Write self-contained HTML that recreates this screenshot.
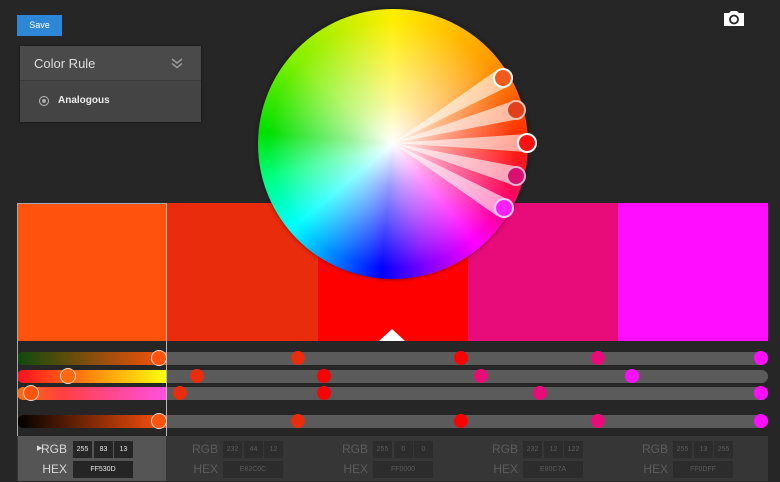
<!DOCTYPE html>
<html><head><style>
*{margin:0;padding:0;box-sizing:border-box}
body{width:780px;height:482px;background:#262626;position:relative;overflow:hidden;font-family:"Liberation Sans",sans-serif}
.abs{position:absolute}
.sw{position:absolute;top:203px;height:138px}
.track{position:absolute;left:17px;width:751px;height:13px;border-radius:7px;background:#5b5b5b}
.grad{position:absolute;left:17px;width:150px;height:13px;border-radius:7px 0 0 7px}
.dot{position:absolute;width:14px;height:14px;border-radius:50%;margin:-7px 0 0 -7px}
.ring{position:absolute;width:16px;height:16px;border-radius:50%;margin:-8px 0 0 -8px;border:1.5px solid #f3d6c6}
.panel{position:absolute;top:436px;height:45px;width:150px}
.lbl{position:absolute;font-size:12px;color:#5d5d5d;text-align:right;width:30px}
.box{position:absolute;height:17px;background:#2c2c2c;font-size:7px;color:#5d5d5d;text-align:center;line-height:17px}
.sel .lbl{color:#d8d8d8}.sel .box{background:#252525;color:#e8e8e8}
</style></head><body>
<div class="abs" style="left:17px;top:15px;width:45px;height:21px;background:#2e86d6;color:#fff;font-size:9px;line-height:21px;text-align:center">Save</div>
<div class="abs" style="left:20px;top:46px;width:181px;height:76px;background:#444;box-shadow:0 0 3px #111">
 <div style="height:35px;background:#4a4a4a;border-bottom:1px solid #3a3a3a;color:#ddd;font-size:13px;line-height:35px;padding-left:14px;position:relative">Color Rule<svg style="position:absolute;left:151px;top:12px" width="12" height="11" viewBox="0 0 12 11"><path d="M1 1 L6 5 L11 1 M1 5.5 L6 9.5 L11 5.5" fill="none" stroke="#999" stroke-width="1.5"/></svg></div>
 <div style="height:40px;color:#eee;font-size:10px;font-weight:bold;line-height:40px;padding-left:38px;position:relative">Analogous<span style="position:absolute;left:19px;top:15px;width:10px;height:10px;border:1px solid #bbb;border-radius:50%"></span><span style="position:absolute;left:22px;top:18px;width:4px;height:4px;background:#aaa;border-radius:50%"></span></div>
</div>
<svg class="abs" style="left:722px;top:10px" width="24" height="18" viewBox="0 0 24 18"><path d="M7 3 L9 1 H15 L17 3 H22 V16 H2 V3 Z" fill="#fff"/><circle cx="12" cy="9.5" r="4" fill="none" stroke="#222" stroke-width="1.8"/></svg>
<div class="sw" style="left:17px;width:150px;background:#ff530d"></div>
<div class="sw" style="left:167px;width:151px;background:#e82c0c"></div>
<div class="sw" style="left:318px;width:150px;background:#ff0000"></div>
<div class="sw" style="left:468px;width:150px;background:#e80c7a"></div>
<div class="sw" style="left:618px;width:150px;background:#ff0dff"></div>
<div class="abs" style="left:379px;top:329px;width:0;height:0;border-left:13px solid transparent;border-right:13px solid transparent;border-bottom:12px solid #fff"></div>
<div class="abs" style="left:258px;top:9px;width:270px;height:270px;border-radius:50%;background:conic-gradient(from 0deg,#ffee00,#ff9900 50deg,#ff2000 90deg,#ff0080 120deg,#ff00ff 140deg,#8000ff 165deg,#0000ff 185deg,#0090ff 210deg,#00ffff 230deg,#00ff80 255deg,#00e000 275deg,#80f000 310deg,#ffee00);box-shadow:0 0 4px rgba(0,0,0,.5)"><div style="position:absolute;inset:0;border-radius:50%;background:radial-gradient(circle,#fff 0,rgba(255,255,255,.6) 22%,rgba(255,255,255,0) 65%)"></div></div>
<svg class="abs" style="left:0;top:0" width="780" height="482">
<g fill="#fff" fill-opacity=".6">
<polygon points="393,143 497,70 509,86"/>
<polygon points="393,143 513,101 519,119"/>
<polygon points="393,143 527,134 527,152"/>
<polygon points="393,143 519,167 513,185"/>
<polygon points="393,143 509,200 497,216"/>
</g>
<circle cx="503" cy="78" r="9" fill="#f05a1a" stroke="#fff" stroke-width="2"/>
<circle cx="516" cy="110" r="9" fill="#e0401a" stroke="#f0c0b0" stroke-width="2"/>
<circle cx="527" cy="143" r="9" fill="#ff1010" stroke="#fff" stroke-width="2"/>
<circle cx="516" cy="176" r="9" fill="#d81070" stroke="#f0b0d0" stroke-width="2"/>
<circle cx="504" cy="208" r="9" fill="#ff20ff" stroke="#f8c8f8" stroke-width="2"/>
</svg>
<div class="track" style="top:352px"></div>
<div class="track" style="top:370px"></div>
<div class="track" style="top:387px"></div>
<div class="track" style="top:415px"></div>
<div class="grad" style="top:352px;background:linear-gradient(90deg,#0d4a0d,#ff530d)"></div>
<div class="grad" style="top:370px;background:linear-gradient(90deg,#ff0d20,#ff8a0d 50%,#ffff0d)"></div>
<div class="grad" style="top:387px;background:linear-gradient(90deg,#ff700d,#ff4040 30%,#ff50e0)"></div>
<div class="grad" style="top:415px;background:linear-gradient(90deg,#000,#ff530d)"></div>
<div class="abs" style="left:17px;top:203px;width:150px;height:278px;border:1px solid #aaa;border-right-color:#bbb"></div>
<div class="ring" style="left:159px;top:358px;background:#ff530d"></div>
<div class="ring" style="left:68px;top:376px;background:#ff6a0d"></div>
<div class="ring" style="left:31px;top:393px;background:#ff530d"></div>
<div class="ring" style="left:159px;top:421px;background:#ff530d"></div>
<div class="dot" style="left:298px;top:358px;background:#e82c0c"></div>
<div class="dot" style="left:461px;top:358px;background:#ff0000"></div>
<div class="dot" style="left:598px;top:358px;background:#e80c7a"></div>
<div class="dot" style="left:761px;top:358px;background:#ff0dff"></div>
<div class="dot" style="left:197px;top:376px;background:#e82c0c"></div>
<div class="dot" style="left:324px;top:376px;background:#ff0000"></div>
<div class="dot" style="left:481px;top:376px;background:#e80c7a"></div>
<div class="dot" style="left:632px;top:376px;background:#ff0dff"></div>
<div class="dot" style="left:180px;top:393px;background:#e82c0c"></div>
<div class="dot" style="left:324px;top:393px;background:#ff0000"></div>
<div class="dot" style="left:540px;top:393px;background:#e80c7a"></div>
<div class="dot" style="left:761px;top:393px;background:#ff0dff"></div>
<div class="dot" style="left:298px;top:421px;background:#e82c0c"></div>
<div class="dot" style="left:461px;top:421px;background:#ff0000"></div>
<div class="dot" style="left:598px;top:421px;background:#e80c7a"></div>
<div class="dot" style="left:761px;top:421px;background:#ff0dff"></div>
<div class="abs" style="left:17px;top:436px;width:751px;height:45px;background:#363636"></div>
<div class="panel sel" style="left:18px;background:#555;width:148px"><span class="abs" style="left:19px;top:8px;color:#ddd;font-size:7px">&#9654;</span><div class="lbl" style="left:0;top:6px;width:49px">RGB</div><div class="lbl" style="left:0;top:26px;width:49px">HEX</div><div class="box" style="left:55px;top:5px;width:19px">255</div><div class="box" style="left:76px;top:5px;width:19px">83</div><div class="box" style="left:96px;top:5px;width:19px">13</div><div class="box" style="left:55px;top:25px;width:60px">FF530D</div></div>
<div class="panel" style="left:167px"><div class="lbl" style="left:21px;top:6px">RGB</div><div class="lbl" style="left:21px;top:26px">HEX</div><div class="box" style="left:56px;top:5px;width:19px">232</div><div class="box" style="left:77px;top:5px;width:19px">44</div><div class="box" style="left:97px;top:5px;width:19px">12</div><div class="box" style="left:56px;top:25px;width:60px">E82C0C</div></div>
<div class="panel" style="left:317px"><div class="lbl" style="left:21px;top:6px">RGB</div><div class="lbl" style="left:21px;top:26px">HEX</div><div class="box" style="left:56px;top:5px;width:19px">255</div><div class="box" style="left:77px;top:5px;width:19px">0</div><div class="box" style="left:97px;top:5px;width:19px">0</div><div class="box" style="left:56px;top:25px;width:60px">FF0000</div></div>
<div class="panel" style="left:467px"><div class="lbl" style="left:21px;top:6px">RGB</div><div class="lbl" style="left:21px;top:26px">HEX</div><div class="box" style="left:56px;top:5px;width:19px">232</div><div class="box" style="left:77px;top:5px;width:19px">12</div><div class="box" style="left:97px;top:5px;width:19px">122</div><div class="box" style="left:56px;top:25px;width:60px">E80C7A</div></div>
<div class="panel" style="left:617px"><div class="lbl" style="left:21px;top:6px">RGB</div><div class="lbl" style="left:21px;top:26px">HEX</div><div class="box" style="left:56px;top:5px;width:19px">255</div><div class="box" style="left:77px;top:5px;width:19px">13</div><div class="box" style="left:97px;top:5px;width:19px">255</div><div class="box" style="left:56px;top:25px;width:60px">FF0DFF</div></div>
</body></html>
